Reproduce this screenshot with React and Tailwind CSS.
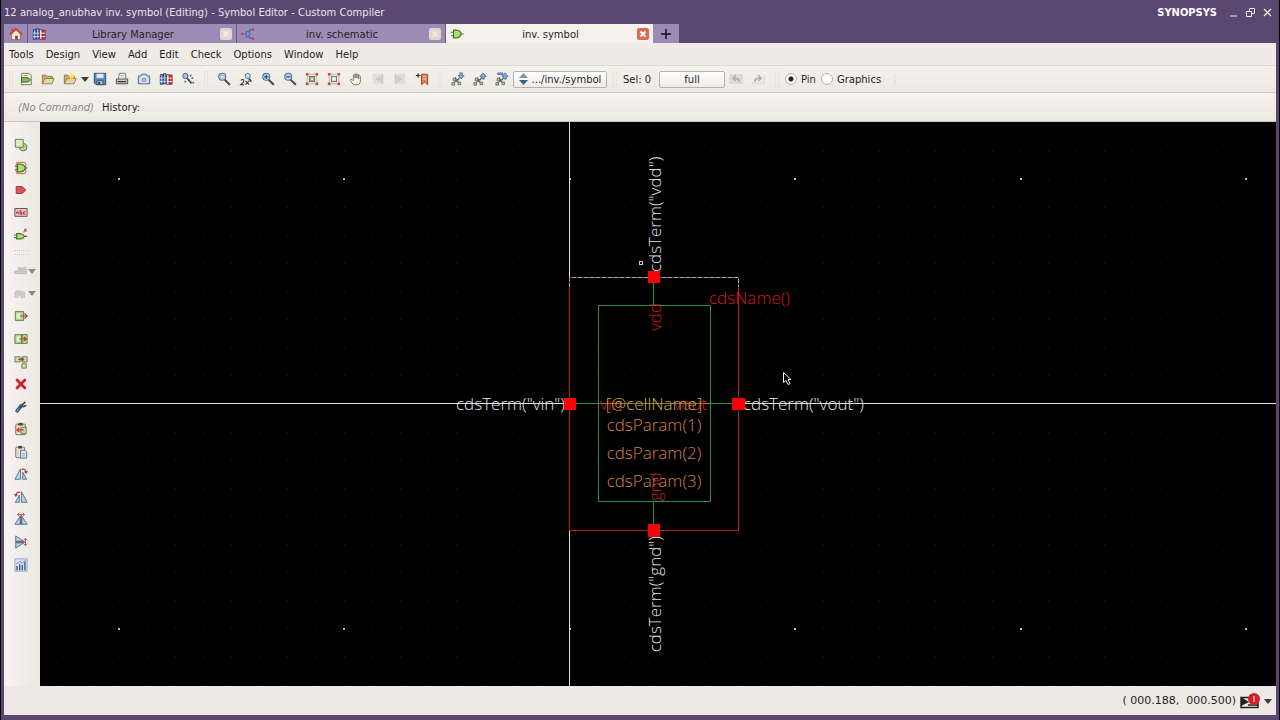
import React, { useState } from "react";

const MENUS = ["Tools", "Design", "View", "Add", "Edit", "Check", "Options", "Window", "Help"];

function Icon({ children, className = "size-[14px]" }) {
  return (
    <svg viewBox="0 0 16 16" className={`${className} shrink-0`} fill="none" aria-hidden="true">
      {children}
    </svg>
  );
}

function Lens({ children }) {
  return (
    <>
      <path d="M9 9l5 5" stroke="#4a4a48" strokeWidth="2.4" strokeLinecap="round" />
      <circle cx="6" cy="5.5" r="4" fill="#c4d6ec" stroke="#56708f" strokeWidth="1.2" />
      {children}
    </>
  );
}

function Books() {
  return (
    <>
      <path d="M1.500 3h3v11h-3zM5 2h3v11.500h-3z" fill="#8db2dc" stroke="#1d3c70" />
      <path d="M8.500 3h3v11h-3z" fill="#f1d4d4" stroke="#7d2634" />
      <path d="M12 3.500h3v10.500h-3z" fill="#d8404a" stroke="#7d2634" />
      <path d="M1 7h7M1 11h7" stroke="#dbe7f5" />
      <path d="M9 7h6M9 11h6" stroke="#fff" />
    </>
  );
}

function FolderShape() {
  return (
    <>
      <path d="M1.500 13V3.500h4l1.500 1.500h6v3" fill="#c8ab74" stroke="#8d7850" />
      <path d="M1.500 13.500l3-6h10.500l-2.500 6z" fill="#ead6a4" stroke="#8d7850" />
    </>
  );
}

function FitFrame({ inner }) {
  return (
    <>
      <rect x="2.500" y="2.500" width="11" height="11" stroke="#dba5a0" />
      <path d="M1 1h3v3H1zM12 1h3v3h-3zM1 12h3v3H1zM12 12h3v3h-3z" fill="#b8524f" />
      <rect x="5" y="5" width="6" height="6" fill={inner} stroke="#5f6f59" />
      <rect x="7" y="7" width="2" height="2" fill="#fff" />
    </>
  );
}

function Hierarchy({ top }) {
  return (
    <>
      <path d="M2 14l4-4 4 3M3 9h5l2-3M6 10l-1-4" stroke="#4b5a4b" strokeWidth="1.200" />
      <path d="M1 12h3v3H1zM8 11.500h3v3H8zM2.500 7h3v3h-3z" fill="#b1c29c" stroke="#56634a" strokeWidth=".8" />
      <path d={top} fill="#8facdc" stroke="#46659a" strokeWidth=".9" />
    </>
  );
}

function Gate({ y = 0 }) {
  return (
    <path
      d={`M1 ${6 + y}h3M1 ${10 + y}h3M4 ${3.5 + y}h4q4 1 5 4.500q-1 3.500-5 4.500h-4zM13 ${8 + y}h2.500`}
      fill="#b1dc74"
      stroke="#4c742c"
      strokeWidth="1.300"
    />
  );
}

const ICONS = {
  home: (
    <>
      <path d="M3 8v6.500h10V8L8 3z" fill="#f5ead8" stroke="#8a6a50" />
      <path d="M1 8.500L8 2l7 6.500" stroke="#c9432f" strokeWidth="2" />
      <path d="M7 10h3v4.500H7z" fill="#7a4630" />
      <path d="M3 2h2v3H3z" fill="#b54434" />
    </>
  ),
  books: <Books />,
  schematic: (
    <>
      <path d="M1 8h5M6 4v8M6 5h4V3h4M6 11h4v2h4" stroke="#4468bd" strokeWidth="1.300" />
      <path d="M0 7h2.500v2.500H0zM12.500 1.500H15V4h-2.500zM12.500 12H15v2.500h-2.500z" fill="#d23a3f" />
      <path d="M8 6l3 2-3 2" stroke="#4468bd" />
    </>
  ),
  gate: <Gate />,
  newDoc: (
    <>
      <path d="M3 1.500h8.500l2.500 2.500v10.500H3z" fill="#eef0dc" stroke="#6d7361" />
      <path d="M3 6.500h6q3 0 4 2.500-1 2.500-4 2.500H3z" fill="#8fbb5c" stroke="#365223" />
      <path d="M5 4h5" stroke="#98a083" />
    </>
  ),
  folder: <FolderShape />,
  folderNew: (
    <>
      <FolderShape />
      <path d="M10 1l1 2.500 2.500.5-2 2 .5 2.500-2-1.500-2.500 1.500.5-2.500-2-2 2.500-.5z" fill="#ffdf4a" />
    </>
  ),
  save: (
    <>
      <path d="M1.500 1.500h13v13h-11l-2-2z" fill="#568ab9" stroke="#24486d" />
      <path d="M4 2h8v5H4z" fill="#dfeaf2" />
      <path d="M4.500 9.500h7v5h-7z" fill="#a7b7c3" stroke="#315270" />
      <path d="M6 11h2v3H6z" fill="#23415e" />
    </>
  ),
  print: (
    <>
      <path d="M4 8l1-6.500h7L12.500 8" fill="#fff" stroke="#6b6b68" />
      <path d="M6 4h5M6 6h5" stroke="#9eb3cc" />
      <path d="M1.500 8h13v5.500h-13z" fill="#c4c5c0" stroke="#454642" />
      <path d="M3 11h10" stroke="#42433f" strokeWidth="1.500" />
    </>
  ),
  camera: (
    <>
      <path d="M1.500 4.500h3l1-2h5l1 2h3v9h-13z" fill="#cfdbe9" stroke="#475a74" />
      <circle cx="8" cy="9" r="3.300" fill="#7899cc" stroke="#f5f8fb" />
      <circle cx="8" cy="9" r="1.200" fill="#c9dcf5" />
    </>
  ),
  probe: (
    <>
      <circle cx="5" cy="4.500" r="3" fill="#a9c0e3" stroke="#3c5787" />
      <path d="M7 7l5 6" stroke="#3c4c68" strokeWidth="2" />
      <path d="M10 3h2v2h-2zM12 6h2v2h-2zM4 10h2v2H4zM13 11h2v2h-2z" fill="#4c6fb0" />
    </>
  ),
  zoomArea: <Lens><path d="M4 4h4v3H4z" fill="#f6f9fc" stroke="#7189a8" strokeWidth=".6" /></Lens>,
  zoom2x: (
    <>
      <path d="M11 7l3 4" stroke="#4a4a48" strokeWidth="2" />
      <circle cx="10" cy="4.500" r="3" fill="#c4d6ec" stroke="#56708f" />
      <path d="M2 9.500q3-2 3.500.5q0 1.500-3.500 4.500h4M7.500 10l4 4.500M11.500 10l-4 4.500" stroke="#333" strokeWidth="1.200" />
    </>
  ),
  zoomIn: <Lens><path d="M3.500 5.500h5M6 3v5" stroke="#234f93" strokeWidth="1.400" /></Lens>,
  zoomOut: <Lens><path d="M3.500 5.500h5" stroke="#234f93" strokeWidth="1.400" /></Lens>,
  fit: <FitFrame inner="#90b56d" />,
  fitSel: <FitFrame inner="#d9dbdd" />,
  hand: (
    <path
      d="M5 14.500L1.500 9.500q0-2 2-1L5 10V3.500q1-1.500 2 0V7V2.500q1-1.500 2 0V7V3q1-1.500 2 0v5V4.500q1.500-1 2 .5v5.500q0 2-2 4z"
      fill="#fbf6e6"
      stroke="#75705f"
    />
  ),
  prev: (
    <>
      <path d="M2 2h12v12H2z" fill="#e2dfda" />
      <path d="M11 4v8L5 8zM12 3h2v10h-2z" fill="#c9c7c3" />
    </>
  ),
  next: (
    <>
      <path d="M2 2h12v12H2z" fill="#e2dfda" />
      <path d="M5 4v8l6-4zM2 3h2v10H2z" fill="#c9c7c3" />
    </>
  ),
  bookmark: (
    <>
      <path d="M7.500 2.500h7v12L11 11.500l-3.500 3z" fill="#e08252" stroke="#9a3e28" />
      <path d="M9 5h4M9 8h4" stroke="#f4d0b4" />
      <path d="M1 4h5M3.500 1.500v5" stroke="#252525" strokeWidth="1.300" />
    </>
  ),
  hierDown: <Hierarchy top="M8 4h2V1h3v3h2l-3.500 4z" />,
  hierUp: <Hierarchy top="M8 5h2v3h3V5h2l-3.500-4z" />,
  hierTop: <Hierarchy top="M8 5h2v3h3V5h2l-3.500-4zM3 1h6v2H3z" />,
  undo: (
    <>
      <path d="M1 3h14v10H1z" fill="#e0ddd8" stroke="#cfccc7" strokeDasharray="2 1" />
      <path d="M12 12q1-5-5-5M7 4L4 7l3 3z" fill="#b5b3af" stroke="#b5b3af" strokeWidth="1.400" />
    </>
  ),
  redo: (
    <>
      <path d="M1 13h14V3" stroke="#cfccc7" strokeDasharray="2 1" />
      <path d="M4 12q-1-5 5-5M9 4l3 3-3 3z" fill="#b5b3af" stroke="#b5b3af" strokeWidth="1.400" />
    </>
  ),
  shapes: (
    <>
      <circle cx="10.500" cy="10.500" r="4.300" fill="#bad38e" stroke="#5c7143" />
      <path d="M1.500 1.500h9v9h-9z" fill="#dcebc4" stroke="#587244" />
    </>
  ),
  gateBox: (
    <>
      <rect x="2.500" y="1.500" width="11" height="13" rx="2" fill="#f4dec3" stroke="#bd6549" />
      <Gate />
    </>
  ),
  pin: <path d="M2.500 4h7l4 4-4 4h-7z" fill="#e0525a" stroke="#a52f36" />,
  label: (
    <>
      <path d="M1 4h14v9H1z" fill="#efbcbc" stroke="#594a4a" />
      <path d="M3 10V8h2v2.500M7 6v4.500h2V8H7M13 8h-2v2.500h2" stroke="#9b2a30" />
    </>
  ),
  gateNew: (
    <>
      <path d="M0 8h3M0 11h3M3 6.500h5q3 .5 4 3-1 2.500-4 3H3zM12 9.500h3" fill="#b1dc74" stroke="#4c742c" strokeWidth="1.300" />
      <path d="M11 5l3-4M12 1l2.500 3" stroke="#d3403e" strokeWidth="1.300" />
    </>
  ),
  grayA: <path d="M1 8h4V4h4v2l3-3 2 2v6H1z" fill="#c9c7c5" stroke="#bdbbb9" />,
  grayB: <path d="M1 12V6l3-2 4 1 4 1v6h-4V8L4 12z" fill="#cfcdcb" stroke="#c2c0be" />,
  move: (
    <>
      <path d="M1.500 3h9.500v10H1.500z" fill="#b5da91" stroke="#58763d" />
      <path d="M3 5h4v6H3z" fill="#e0efcf" />
      <path d="M7 8h8M12 5l3 3-3 3" stroke="#b63930" strokeWidth="1.400" />
    </>
  ),
  stretch: (
    <>
      <path d="M1 3h14v10H1z" fill="#b5da91" stroke="#58763d" />
      <path d="M3 5h4v6H3z" fill="#e0efcf" />
      <path d="M9 3v10" stroke="#364e29" />
      <path d="M6 8h9M11 5.500l3 2.500-3 2.500" stroke="#b63930" strokeWidth="1.300" />
    </>
  ),
  copy: (
    <>
      <path d="M1 2h6v6H1zM9 2h6v6H9zM9 10h5v5H9z" fill="#c5dfa6" stroke="#69784b" />
      <path d="M5 5h6M9 3l2 2-2 2" stroke="#b63930" strokeWidth="1.400" />
    </>
  ),
  del: <path d="M3.500 3.500l9 9M12.500 3.500l-9 9" stroke="#cf2027" strokeWidth="3.200" strokeLinecap="round" />,
  wrench: (
    <>
      <path d="M3.500 12.500l5-6" stroke="#3c5575" strokeWidth="4" strokeLinecap="round" />
      <path d="M8 7l5-5M10 8l4-2" stroke="#3b4b60" strokeWidth="2" />
      <path d="M3 13l3-3.500" stroke="#9fb9d8" />
    </>
  ),
  cut: (
    <>
      <rect x="2" y="2.500" width="11" height="12" rx="1" fill="#f2ddbd" stroke="#805b38" />
      <path d="M5 1h5v3H5z" fill="#4c4a47" />
      <path d="M8 6h6v7H8z" fill="#c5dfa6" stroke="#69784b" />
      <path d="M3 9h8M6 6.500L3.500 9 6 11.500" stroke="#b63930" strokeWidth="1.400" />
    </>
  ),
  paste: (
    <>
      <rect x="2" y="2.500" width="10" height="12" rx="1" fill="#e6dccb" stroke="#766753" />
      <path d="M5 1h4v3H5z" fill="#42413f" />
      <path d="M7.500 6h5l2 2v7h-7z" fill="#dce9f8" stroke="#4e6f9c" />
      <path d="M9 10h4M9 12.500h4" stroke="#7c99c0" />
    </>
  ),
  rotRight: (
    <>
      <path d="M1 14L7.500 2v12zM10 6l4.500 8H10z" fill="#bed3e8" stroke="#4a6788" />
      <path d="M9 3q4-2 5 3M12 5l2 2 1.500-2.500" stroke="#c03a36" strokeWidth="1.300" />
    </>
  ),
  rotLeft: (
    <>
      <path d="M15 14L8.500 2v12zM6 6l-4.500 8H6z" fill="#bed3e8" stroke="#4a6788" />
      <path d="M7 3Q3 1 2 6M.5 4.500L2 7l2-2" stroke="#c03a36" strokeWidth="1.300" />
    </>
  ),
  flipH: (
    <>
      <path d="M1 14l6-9v9zM15 14L9 5v9z" fill="#bed3e8" stroke="#4a6788" />
      <path d="M8 3v12" stroke="#333" />
      <path d="M4 3h8M6 1L4 3l2 2M10 1l2 2-2 2" stroke="#c03a36" />
    </>
  ),
  flipV: (
    <>
      <path d="M2 1l9 6H2zM2 15l9-6H2z" fill="#bed3e8" stroke="#4a6788" />
      <path d="M1 8h12" stroke="#333" />
      <path d="M13 4v8M11 6l2-2 2 2M11 10l2 2 2-2" stroke="#c03a36" />
    </>
  ),
  chart: (
    <>
      <path d="M1 1h14v14H1z" fill="#d7e3f1" stroke="#8fa3bd" />
      <path d="M3.500 14V9M6.500 14V7M9.500 14V8M12.500 14V4" stroke="#35537f" strokeWidth="1.500" />
      <path d="M2.500 7l4-3 3 2 4-4" stroke="#6385b5" />
    </>
  ),
};

function ToolButton({ icon, label }) {
  return (
    <button className="flex w-[22px] shrink-0 items-center justify-center" aria-label={label}>
      <Icon>{ICONS[icon]}</Icon>
    </button>
  );
}

function Caret({ color = "#3c3b39" }) {
  return (
    <svg viewBox="0 0 8 5" className="h-[5px] w-2 shrink-0" aria-hidden="true">
      <path d="M0 0h8L4 5z" fill={color} />
    </svg>
  );
}

function Grip() {
  return <span className="h-4 w-1 shrink-0 border-x border-dotted border-[#dfdcd6]" />;
}

function Tab({ icon, title, active }) {
  return (
    <div
      className={`flex shrink items-center px-1 ${
        active ? "w-[207px] bg-[#f4f1ec]" : "w-[209px] border-r border-[#6c598a] bg-[#9d8bb7]"
      }`}
    >
      <Icon>{ICONS[icon]}</Icon>
      <button className="flex-1 truncate pt-px text-center">{title}</button>
      <button
        aria-label={`Close ${title}`}
        className={`flex size-3 items-center justify-center rounded-xs ${active ? "bg-[#dc6a55]" : "bg-[#e5d3cf]"}`}
      >
        <svg viewBox="0 0 8 8" className="size-2" aria-hidden="true">
          <path d="M1.500 1.500l5 5M6.500 1.500l-5 5" stroke={active ? "#fff" : "#f5ebdd"} strokeWidth="1.800" />
        </svg>
      </button>
    </div>
  );
}

function TitleBar() {
  return (
    <header className="flex h-6 shrink-0 items-center justify-between bg-[#5a4870] pr-1 text-[#e9e4f0]">
      <h1>12 analog_anubhav inv. symbol (Editing) - Symbol Editor - Custom Compiler</h1>
      <div className="flex items-center gap-2">
        <span className="mr-1 font-['DejaVu_Sans_Condensed','DejaVu_Sans',sans-serif] text-[11px] leading-none font-bold text-white">
          SYNOPSYS
        </span>
        <button aria-label="Minimize">
          <svg viewBox="0 0 9 9" className="size-[9px]"><path d="M1 8h7" stroke="#eee" /></svg>
        </button>
        <button aria-label="Restore">
          <svg viewBox="0 0 9 9" className="size-[9px]" fill="none">
            <path d="M.5 3.500h5v5h-5zM3.500 3V.5h5v5H6" stroke="#eee" />
          </svg>
        </button>
        <button aria-label="Close">
          <svg viewBox="0 0 9 9" className="size-[9px]"><path d="M1 1l7 7M8 1L1 8" stroke="#eee" strokeWidth="1.300" /></svg>
        </button>
      </div>
    </header>
  );
}

function Tabs() {
  return (
    <nav className="flex h-[19px] shrink-0 bg-[#5a4870]">
      <button aria-label="Home" className="flex w-6 items-center justify-center border-r border-[#6c598a] bg-[#9d8bb7]">
        <Icon>{ICONS.home}</Icon>
      </button>
      <Tab icon="books" title="Library Manager" />
      <Tab icon="schematic" title="inv. schematic" />
      <Tab icon="gate" title="inv. symbol" active />
      <button aria-label="New tab" className="flex w-[26px] items-center justify-center bg-[#9d8bb7]">
        <svg viewBox="0 0 10 10" className="size-[10px]"><path d="M0 5h10M5 0v10" stroke="#111" strokeWidth="1.500" /></svg>
      </button>
    </nav>
  );
}

function Toolbar() {
  const [mode, setMode] = useState("Pin");
  return (
    <div className="flex h-7 shrink-0 items-center border-y border-t-[#dcd8d2] border-b-[#cfccc6] bg-linear-to-b from-[#f5f2ec] to-[#ece8e2] pl-[5px]">
      <Grip />
      <div className="ml-[2px] flex items-center">
        <ToolButton icon="newDoc" label="New" />
        <ToolButton icon="folder" label="Open" />
        <ToolButton icon="folderNew" label="Open recent" />
        <button aria-label="Recent files"><Caret /></button>
        <ToolButton icon="save" label="Save" />
        <ToolButton icon="print" label="Print" />
        <ToolButton icon="camera" label="Capture" />
        <ToolButton icon="books" label="Libraries" />
        <ToolButton icon="probe" label="Probe" />
      </div>
      <div className="flex w-[14px] justify-center"><Grip /></div>
      <div className="flex items-center">
        <ToolButton icon="zoomArea" label="Zoom to area" />
        <ToolButton icon="zoom2x" label="Zoom 2x" />
        <ToolButton icon="zoomIn" label="Zoom in" />
        <ToolButton icon="zoomOut" label="Zoom out" />
        <ToolButton icon="fit" label="Fit" />
        <ToolButton icon="fitSel" label="Fit selection" />
        <ToolButton icon="hand" label="Pan" />
        <ToolButton icon="prev" label="Previous view" />
        <ToolButton icon="next" label="Next view" />
        <ToolButton icon="bookmark" label="Add bookmark" />
      </div>
      <div className="flex w-[14px] justify-center"><Grip /></div>
      <div className="flex items-center">
        <ToolButton icon="hierDown" label="Descend" />
        <ToolButton icon="hierUp" label="Ascend" />
        <ToolButton icon="hierTop" label="Top level" />
      </div>
      <button className="flex h-[17px] w-[94px] items-center justify-center gap-1 rounded-xs border border-[#b6b2ab] bg-linear-to-b from-white to-[#eeebe6]">
        <svg viewBox="0 0 9 12" className="h-3 w-[9px]" aria-hidden="true">
          <path d="M0 5l4.500-5L9 5z" fill="#8295ab" />
          <path d="M0 7h9l-4.500 5z" fill="#3f618e" />
        </svg>
        .../inv./symbol
      </button>
      <div className="flex w-4 justify-center"><Grip /></div>
      <span className="w-9">Sel: 0</span>
      <button className="h-[17px] w-[66px] rounded-xs border border-[#b6b2ab] bg-linear-to-b from-white to-[#eeebe6]">
        full
      </button>
      <ToolButton icon="undo" label="Undo" />
      <ToolButton icon="redo" label="Redo" />
      <div className="flex w-4 justify-center"><Grip /></div>
      {["Pin", "Graphics"].map((name) => (
        <label key={name} className="mr-[5px] flex items-center gap-1">
          <input
            type="radio"
            name="mode"
            checked={mode === name}
            onChange={() => setMode(name)}
            className="size-3 appearance-none rounded-full border border-[#b5b1aa] bg-white checked:bg-[radial-gradient(circle,#222_0_2px,#fff_3px)]"
          />
          {name}
        </label>
      ))}
      <div className="ml-2"><Grip /></div>
    </div>
  );
}

const PALETTE_TOP = [
  ["shapes", "Add shape"],
  ["gateBox", "Add selection box"],
  ["pin", "Add pin"],
  ["label", "Add label"],
  ["gateNew", "Generate symbol"],
];

const PALETTE_BOTTOM = [
  ["grayA", "Undo", true],
  ["grayB", "Redo", true],
  ["move", "Move"],
  ["stretch", "Stretch"],
  ["copy", "Copy"],
  ["del", "Delete"],
  ["wrench", "Properties"],
  ["cut", "Cut to clipboard"],
  ["paste", "Paste"],
  ["rotRight", "Rotate right"],
  ["rotLeft", "Rotate left"],
  ["flipH", "Flip horizontal"],
  ["flipV", "Flip vertical"],
  ["chart", "Align"],
];

function Palette() {
  return (
    <aside className="flex w-9 shrink-0 flex-col bg-linear-to-r from-[#f7f3f2] to-[#ebe8e1] pt-3 pl-[6px]">
      <div className="flex h-[112px] shrink-0 flex-col justify-around">
        {PALETTE_TOP.map(([icon, label]) => (
          <ToolButton key={icon} icon={icon} label={label} />
        ))}
      </div>
      <span className="mx-1 mt-1 mb-[5px] h-[5px] w-4 shrink-0 border-y border-dotted border-[#d3d0ca]" />
      <div className="flex h-[316px] shrink-0 flex-col justify-around">
        {PALETTE_BOTTOM.map(([icon, label, menu]) => (
          <div key={icon} className="flex items-center">
            <ToolButton icon={icon} label={label} />
            {menu && <span className="-ml-1 flex"><Caret color="#8d8b88" /></span>}
          </div>
        ))}
      </div>
    </aside>
  );
}

const range = (n) => Array.from({ length: n }, (_, i) => i);

function Canvas() {
  return (
    <main className="min-w-0 flex-1 bg-black">
      <svg
        viewBox="0 0 1236 564"
        preserveAspectRatio="xMidYMid slice"
        className="size-full font-['Open_Sans','Noto_Sans',sans-serif] text-[17px] font-light"
        fill="none"
      >
        {range(44).map((c) =>
          range(20).map((r) => (
            <rect key={`${c}-${r}`} x={Math.round(22 + c * 28.17)} y={Math.round(28.5 + r * 28.1)} width="1" height="1" fill="#1b1b1b" />
          ))
        )}
        {range(6).map((c) =>
          [56, 506].map((y) => (
            <rect key={`${c}-${y}`} x={Math.round(78 + c * 225.4)} y={y} width="2" height="2" fill="#b8b8b8" />
          ))
        )}
        <path d="M529.500 0V155M529.500 409V564M0 281.500H529M699 281.500H1236" stroke="#e0e0e0" />
        <path d="M529.500 165V408.500H698.500V165" stroke="#c0181e" />
        <path d="M529.500 165V155.500H698.500V165" stroke="#7d3c40" />
        <path d="M529.500 165V155.500H698.500V165" stroke="#b9a5a5" strokeDasharray="4 2" />
        <path d="M558.500 183.500H670.500V379.500H558.500zM613.500 155V183M613.500 380V408M530 281.500H558M671 281.500H698" stroke="#2c9150" />
        <path d="M559 281.500H670" stroke="#8a7a30" />
        <rect x="599.500" y="139.500" width="3" height="3" stroke="#ccc" />
        <g fill="#d01a20">
          <text x="669" y="182">cdsName()</text>
          <text x="560" y="288">vin</text>
          <text x="667" y="288" textAnchor="end">vout</text>
          <text transform="translate(621 209) rotate(-90)">vdd</text>
          <text transform="translate(621 379) rotate(-90)">gnd</text>
        </g>
        <g textAnchor="middle" fill="#d08040">
          <text x="614" y="288" fill="#c8ae4a">[@cellName]</text>
          <text x="614" y="309">cdsParam(1)</text>
          <text x="614" y="337">cdsParam(2)</text>
          <text x="614" y="365">cdsParam(3)</text>
        </g>
        <g fill="#e6e6e6">
          <text x="525" y="288" textAnchor="end">cdsTerm("vin")</text>
          <text x="703" y="288">cdsTerm("vout")</text>
          <text transform="translate(621 150) rotate(-90)">cdsTerm("vdd")</text>
          <text transform="translate(621 414) rotate(-90)" textAnchor="end">cdsTerm("gnd")</text>
        </g>
        <path d="M608 149h12v12h-12zM524 276h12v12h-12zM692 276h13v12h-13zM608 402h12v13h-12z" fill="#fb0007" />
        <path d="M743.500 250.500v10l2.500-2 2 4 2-1-2-4h3z" fill="#000" stroke="#f2f2f2" />
      </svg>
    </main>
  );
}

function StatusBar() {
  return (
    <footer className="flex h-[29px] shrink-0 items-center justify-end gap-1 bg-[#ede9e4] pt-px pr-1 text-[11px]">
      <span className="whitespace-pre">( 000.188,  000.500)</span>
      <button aria-label="Messages" className="flex items-center gap-1">
        <svg viewBox="0 0 20 16" className="h-4 w-5" fill="none" aria-hidden="true">
          <path d="M1 4.500h17v10H1z" fill="#e8e8e8" stroke="#222" strokeWidth="1.500" />
          <path d="M1 4l8 5-8 4z" fill="#222" />
          <path d="M8 12h10" stroke="#222" strokeWidth="1.500" />
          <circle cx="14" cy="6" r="6" fill="#d3202a" />
          <path d="M14 3v6" stroke="#fff" />
        </svg>
        <Caret />
      </button>
    </footer>
  );
}

export default function App() {
  return (
    <div className="h-screen bg-black px-px">
      <div className="flex h-full flex-col overflow-hidden border-x-3 border-b-5 border-[#5a4870] bg-[#efebe6] font-['DejaVu_Sans',sans-serif] text-[10px] text-[#1f1f1f]">
        <TitleBar />
        <Tabs />
        <nav className="flex h-[22px] shrink-0 items-center gap-3 pl-[5px]">
          {MENUS.map((name) => (
            <button key={name}>{name}</button>
          ))}
        </nav>
        <Toolbar />
        <div className="flex h-[29px] shrink-0 items-center gap-2 border-b border-[#c9c6c0] bg-linear-to-b from-[#f5f2ec] to-[#ece8e2] pl-[14px]">
          <span className="text-[#8b8985] italic">(No Command)</span>
          <span>History:</span>
        </div>
        <div className="flex min-h-0 flex-1">
          <Palette />
          <Canvas />
        </div>
        <StatusBar />
      </div>
    </div>
  );
}
